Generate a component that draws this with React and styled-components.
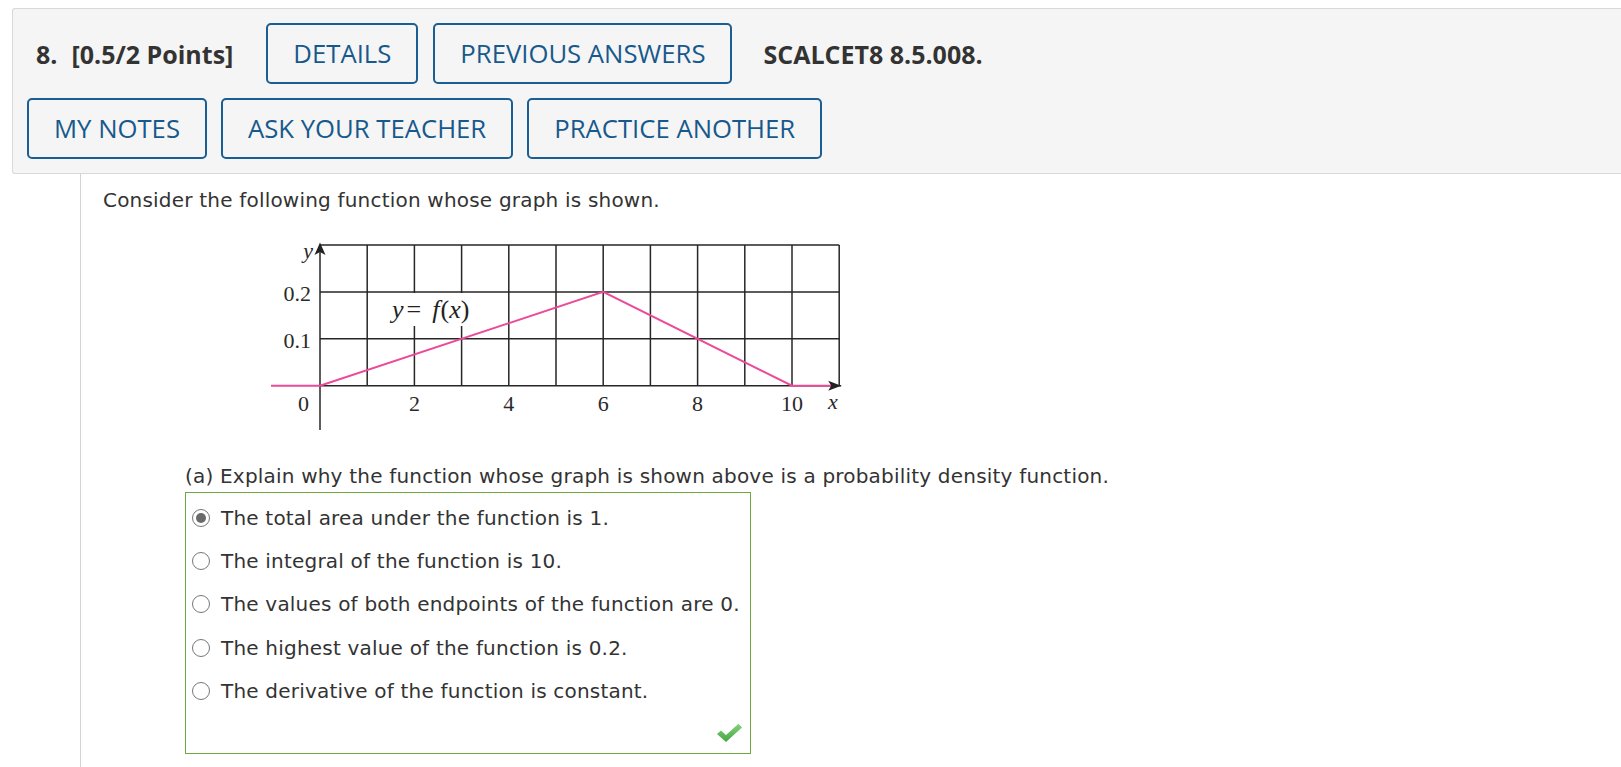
import React from 'react'
import styled, { createGlobalStyle } from 'styled-components'

const GlobalStyle = createGlobalStyle`
  body {
    margin: 0;
    background: #fff;
  }
`

const Page = styled.div`
  min-height: 767px;
  display: flex;
  flex-direction: column;
`

const Header = styled.div`
  margin: 8px 0 0 12px;
  padding: 14px 0 14px 14px;
  background: #f5f5f5;
  border: 1px solid #d9d9d9;
  border-right: none;
  border-radius: 3px 0 0 3px;
  display: flex;
  flex-direction: column;
  gap: 14px;
`

const HeaderRow = styled.div`
  display: flex;
  align-items: center;
  gap: ${p => p.$gap || 15}px;
`

const Title = styled.div`
  font-family: "Open Sans", "Liberation Sans", sans-serif;
  font-weight: 700;
  font-size: 25px;
  color: #333;
  margin: ${p => p.$first ? '0 18px 0 9px' : '0 0 0 16px'};
  white-space: nowrap;

  span {
    margin-right: 14px;
  }
`

const Button = styled.div`
  height: 61px;
  box-sizing: border-box;
  padding: 0 25px;
  border: 2px solid #1b5e93;
  border-radius: 5px;
  display: flex;
  align-items: center;
  font-family: "Open Sans", "Liberation Sans", sans-serif;
  font-size: 25.7px;
  font-weight: 500;
  color: #17598c;
  white-space: nowrap;
`

const Content = styled.div`
  flex: 1;
  margin-left: 80px;
  border-left: 1px solid #d3d3d3;
  padding: 14px 0 0 22px;
  font-family: "DejaVu Sans", Verdana, sans-serif;
  font-size: 20px;
  letter-spacing: 0.2px;
  line-height: 24px;
  color: #333;
`

const Intro = styled.p`
  margin: 0;
`

const Graph = styled.svg`
  display: block;
  margin: 21px 0 0 152px;
  letter-spacing: 0;
`

const Part = styled.div`
  margin: 31px 0 0 82px;
`

const Prompt = styled.p`
  margin: 0 0 4px;
  white-space: nowrap;
`

const AnswerBox = styled.div`
  width: 566px;
  height: 262px;
  box-sizing: border-box;
  border: 1px solid #6ca83f;
  padding: 3px 0 0 6px;
  display: flex;
  flex-direction: column;
`

const Option = styled.div`
  height: 43.4px;
  display: flex;
  align-items: center;
  gap: 11px;
  white-space: nowrap;
`

const Radio = styled.span`
  width: 18px;
  height: 18px;
  box-sizing: border-box;
  border-radius: 50%;
  border: 1.5px solid #777;
  background: #fff;
  display: flex;
  align-items: center;
  justify-content: center;
  flex-shrink: 0;

  &::after {
    content: '';
    width: 10px;
    height: 10px;
    border-radius: 50%;
    background: ${p => p.$checked ? '#6a6a6a' : 'transparent'};
  }
`

const BoxFooter = styled.div`
  flex: 1;
  display: flex;
  justify-content: flex-end;
  align-items: flex-end;
  padding: 0 7px 10px 0;
`

const options = [
  'The total area under the function is 1.',
  'The integral of the function is 10.',
  'The values of both endpoints of the function are 0.',
  'The highest value of the function is 0.2.',
  'The derivative of the function is constant.',
]

const CW = 47.2
const CH = 46.9
const OX = 65
const OY = 152.7

const px = v => OX + v * CW
const py = v => OY - v * CH

const Check = () => (
  <svg width="27" height="20" viewBox="0 0 27 20">
    <defs>
      <linearGradient id="chk" x1="0" y1="0" x2="0" y2="1">
        <stop offset="0" stopColor="#86d47a" />
        <stop offset="1" stopColor="#45a445" />
      </linearGradient>
    </defs>
    <path d="M1 11 L5 7.5 L10 12 L22.5 0.8 L26 4.5 L10 19 Z" fill="url(#chk)" />
  </svg>
)

const FunctionGraph = () => {
  const serif = '"Liberation Serif", "Times New Roman", serif'
  const verticals = Array.from({ length: 11 }, (_, i) => i + 1)
  const horizontals = [1, 2, 3]
  return (
    <Graph width="600" height="200" viewBox="0 0 600 200">
      {verticals.map(i => (
        <line key={'v' + i} x1={px(i)} y1={py(3)} x2={px(i)} y2={OY} stroke="#262626" strokeWidth="1.5" />
      ))}
      {horizontals.map(j => (
        <line key={'h' + j} x1={OX} y1={py(j)} x2={px(11)} y2={py(j)} stroke="#262626" strokeWidth="1.5" />
      ))}
      <line x1={OX} y1={OY} x2={px(11) + 2} y2={OY} stroke="#262626" strokeWidth="1.5" />
      <line x1={OX} y1={14} x2={OX} y2={197} stroke="#262626" strokeWidth="1.5" />
      <path d={`M${OX} 9.5 L${OX + 5.5} 22 L${OX} 19 L${OX - 5.5} 22 Z`} fill="#222" />

      <rect x="132" y="60" width="98" height="33" fill="#fff" />
      <text x="137" y="85" fontFamily={serif} fontSize="26" fill="#222">
        <tspan fontStyle="italic">y</tspan>
        <tspan dx="3">=</tspan>
        <tspan dx="11" fontStyle="italic">f</tspan>
        <tspan dx="1">(</tspan>
        <tspan fontStyle="italic">x</tspan>
        <tspan>)</tspan>
      </text>

      <polyline
        points={`16,${OY} ${OX},${OY} ${px(6)},${py(2)} ${px(10)},${OY} ${px(11) - 8},${OY}`}
        fill="none"
        stroke="#ec4a98"
        strokeWidth="2"
      />
      <path d={`M${px(11) + 2} ${OY} L${px(11) - 11} ${OY - 5} L${px(11) - 8} ${OY} L${px(11) - 11} ${OY + 5} Z`} fill="#222" />

      <g fontFamily={serif} fontSize="22" fill="#2a2a2a">
        <text x="58" y="25" textAnchor="end" fontStyle="italic">y</text>
        <text x="56" y={py(2) + 9} textAnchor="end">0.2</text>
        <text x="56" y={py(1) + 9} textAnchor="end">0.1</text>
        <text x="48.5" y="178" textAnchor="middle">0</text>
        {[2, 4, 6, 8, 10].map(n => (
          <text key={n} x={px(n)} y="178" textAnchor="middle">{n}</text>
        ))}
        <text x="578" y="176" textAnchor="middle" fontStyle="italic">x</text>
      </g>
    </Graph>
  )
}

export default function App() {
  return (
    <Page>
      <GlobalStyle />
      <Header>
        <HeaderRow>
          <Title $first><span>8.</span>[0.5/2 Points]</Title>
          <Button>DETAILS</Button>
          <Button>PREVIOUS ANSWERS</Button>
          <Title>SCALCET8 8.5.008.</Title>
        </HeaderRow>
        <HeaderRow $gap={14}>
          <Button>MY NOTES</Button>
          <Button>ASK YOUR TEACHER</Button>
          <Button>PRACTICE ANOTHER</Button>
        </HeaderRow>
      </Header>
      <Content>
        <Intro>Consider the following function whose graph is shown.</Intro>
        <FunctionGraph />
        <Part>
          <Prompt>(a) Explain why the function whose graph is shown above is a probability density function.</Prompt>
          <AnswerBox>
            {options.map((o, i) => (
              <Option key={i}>
                <Radio $checked={i === 0} />
                {o}
              </Option>
            ))}
            <BoxFooter>
              <Check />
            </BoxFooter>
          </AnswerBox>
        </Part>
      </Content>
    </Page>
  )
}
